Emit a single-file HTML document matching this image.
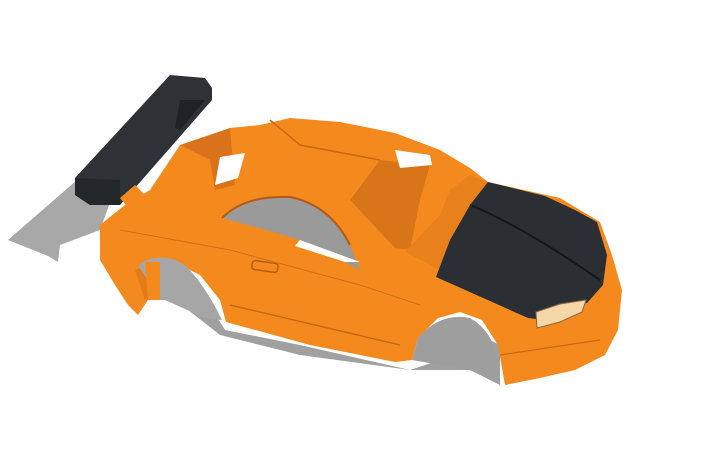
<!DOCTYPE html>
<html><head><style>html,body{margin:0;padding:0;background:#fff;}svg{display:block}</style></head>
<body>
<svg width="725" height="453" viewBox="0 0 725 453" xmlns="http://www.w3.org/2000/svg">
<rect width="725" height="453" fill="#ffffff"/>
<polygon points="8,240 100,160 120,175 100,230 60,245 58,262 48,256" fill="#a8a8a8"/>
<polygon points="150,280 200,290 225,330 300,345 410,370 440,360 470,330 500,345 500,385 470,370 410,370 300,355 220,335" fill="#a0a0a0"/>
<polygon points="100,225 125,205 150,190 180,145 205,140 230,128 260,125 290,118 340,122 395,133 440,150 470,168 488,182 560,198 600,222 612,255 622,290 618,330 605,355 575,370 540,378 505,385 498,345 482,320 460,312 438,318 418,338 412,360 395,362 310,345 226,322 220,300 200,275 180,265 165,262 160,292 148,300 138,315 128,305 115,285 100,260" fill="#f48a1e"/>
<polygon points="180,145 210,160 215,190 235,185 230,128" fill="#d9721a"/>
<polygon points="350,200 380,160 430,165 420,200 410,250 395,248" fill="#d97519"/>
<polygon points="160,262 170,285 160,300 145,300 135,270" fill="#e07c1a"/>
<polygon points="405,252 440,215 450,190 470,175 488,182 460,220 440,270" fill="#e8801c"/>
<path d="M222,218 Q245,195 290,197 Q330,205 350,245 L360,270 L300,240 Q260,228 222,218 Z" fill="#9a9a9a"/>
<polygon points="300,240 360,262 345,262 295,246" fill="#ffffff"/>
<path d="M222,218 Q245,195 290,197 Q330,205 350,245" fill="none" stroke="#b45a10" stroke-width="2"/>
<polygon points="220,157 245,153 238,178 215,185" fill="#fff"/>
<polygon points="395,150 430,155 432,165 400,168" fill="#fff"/>
<path d="M418,338 Q440,312 470,318 Q492,330 498,360 L500,385 L480,372 L412,360 Z" fill="#9e9e9e"/>
<path d="M138,265 Q160,250 185,265 Q205,285 222,320 L205,318 L165,300 L160,300 Z" fill="#a6a6a6"/>
<path d="M145,262 L160,262 L160,300 L148,300 Z" fill="#f48a1e"/>
<rect x="252" y="262" width="26" height="9" rx="3" fill="none" stroke="#b45a10" stroke-width="1.5" transform="rotate(8 265 266)"/>
<path d="M120,230 L230,250 L360,285 L420,305" stroke="#d06d15" stroke-width="1" fill="none"/>
<path d="M230,305 L400,345" stroke="#c86812" stroke-width="1.5" fill="none"/>
<path d="M270,120 L300,145 L380,160" stroke="#c86812" stroke-width="1.5" fill="none"/>
<path d="M500,355 L600,340" stroke="#c86812" stroke-width="1.2" fill="none"/>
<polygon points="488,182 545,196 575,210 597,222 607,255 603,285 587,303 560,308 545,320 528,318 436,277 450,240 470,205" fill="#2b2f33"/>
<path d="M470,205 Q520,225 600,280" stroke="#15181a" stroke-width="2" fill="none"/>
<polygon points="536,312 560,304 586,300 582,312 560,322 537,328" fill="#f7d7a8" stroke="#8a6a40" stroke-width="1"/>
<polygon points="75,178 170,75 205,78 212,88 212,100 120,205 90,205 75,195" fill="#2e3236"/>
<polygon points="180,100 205,100 180,130 175,128" fill="#1f2225"/>
<polygon points="75,178 120,180 120,205 90,205 75,195" fill="#24272a"/>
<polygon points="120,198 135,185 150,200 130,210" fill="#f48a1e"/>
</svg>
</body></html>
